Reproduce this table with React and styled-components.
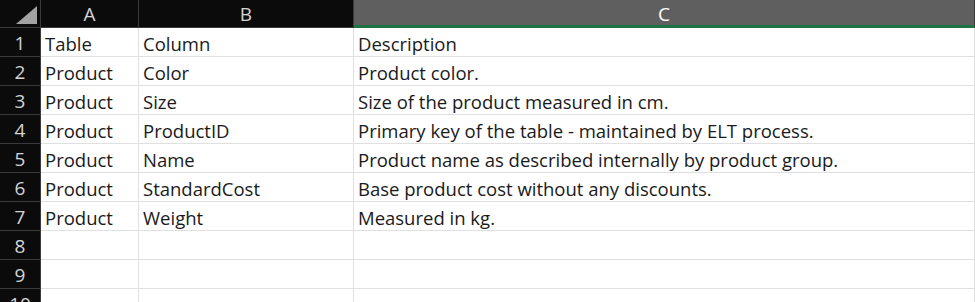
import React from 'react';
import styled, { createGlobalStyle } from 'styled-components';

const GlobalStyle = createGlobalStyle`
  html, body {
    margin: 0;
    padding: 0;
    background: #ffffff;
  }
  body {
    font-family: "Open Sans", "Liberation Sans", sans-serif;
  }
`;

const columns = ['A', 'B', 'C'];
const selectedColumn = 'C';

const rows = [
  ['Table', 'Column', 'Description'],
  ['Product', 'Color', 'Product color.'],
  ['Product', 'Size', 'Size of the product measured in cm.'],
  ['Product', 'ProductID', 'Primary key of the table - maintained by ELT process.'],
  ['Product', 'Name', 'Product name as described internally by product group.'],
  ['Product', 'StandardCost', 'Base product cost without any discounts.'],
  ['Product', 'Weight', 'Measured in kg.'],
  ['', '', ''],
  ['', '', ''],
  ['', '', ''],
];

function App() {
  return (
    <>
      <GlobalStyle />
      <Sheet>
        <Corner>
          <svg width="21" height="18" viewBox="0 0 21 18">
            <polygon points="21,0 21,18 0,18" fill="#a3a3a3" />
          </svg>
        </Corner>
        {columns.map((c) => (
          <ColHeader key={c} selected={c === selectedColumn}>{c}</ColHeader>
        ))}

        {rows.map((row, i) => (
          <React.Fragment key={i}>
            <RowHeader>{i + 1}</RowHeader>
            {row.map((cell, j) => (
              <Cell key={j}>{cell}</Cell>
            ))}
          </React.Fragment>
        ))}
      </Sheet>
    </>
  );
}

const Sheet = styled.div`
  display: grid;
  grid-template-columns: 41px 98px 215px 1fr;
  grid-template-rows: 28px;
  grid-auto-rows: 29px;
  width: 975px;
  height: 302px;
  overflow: hidden;
  font-size: 18.5px;
  color: #1a1a1a;
`;

const Corner = styled.div`
  background: #0b0b0b;
  border-right: 1px solid #3a3a3a;
  border-bottom: 1px solid #3a3a3a;
  display: flex;
  align-items: flex-end;
  justify-content: flex-end;
  padding: 0 3px 3px 0;
`;

const ColHeader = styled.div`
  background: ${(p) => (p.selected ? '#5f5f5f' : '#0b0b0b')};
  color: ${(p) => (p.selected ? '#ffffff' : '#d4d4d4')};
  border-right: 1px solid #3a3a3a;
  border-bottom: ${(p) => (p.selected ? '3px solid #1d7343' : '1px solid #3a3a3a')};
  display: flex;
  align-items: center;
  justify-content: center;
  font-size: 19px;
  padding-top: ${(p) => (p.selected ? '2px' : '0')};
`;

const RowHeader = styled.div`
  background: #0b0b0b;
  color: #d4d4d4;
  border-right: 1px solid #3a3a3a;
  border-bottom: 1px solid #3a3a3a;
  display: flex;
  align-items: center;
  justify-content: center;
  font-size: 19px;
  padding-top: 2px;
`;

const Cell = styled.div`
  background: #ffffff;
  border-right: 1px solid #e0e0e0;
  border-bottom: 1px solid #e0e0e0;
  display: flex;
  align-items: center;
  padding: 2px 0 0 4px;
  white-space: nowrap;
  overflow: visible;
  min-width: 0;
`;

export default App;
